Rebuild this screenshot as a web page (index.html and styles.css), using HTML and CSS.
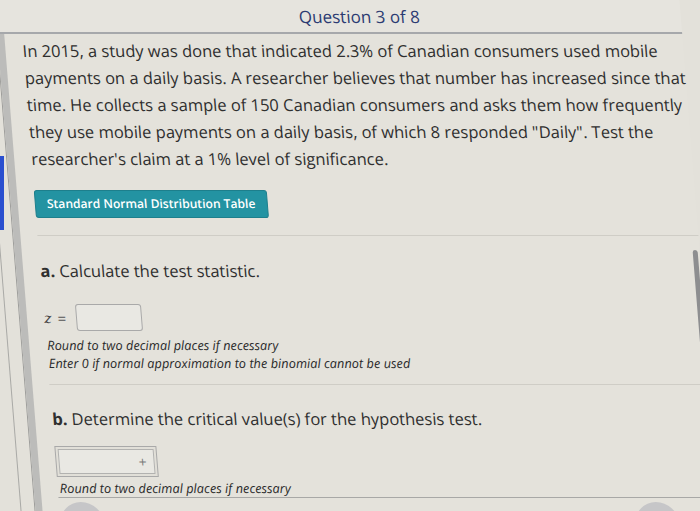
FILE: index.html
```html
<!DOCTYPE html>
<html lang="en">
<head>
<meta charset="utf-8">
<title>Question 3 of 8</title>
<link rel="stylesheet" href="styles.css">
</head>
<body>
<div class="screen">
  <div class="page">
    <header class="title-bar">
      <h1 class="title">Question 3 of 8</h1>
    </header>
    <main class="content">
      <p class="prompt">In 2015, a study was done that indicated 2.3% of Canadian consumers used mobile<br>payments on a daily basis. A researcher believes that number has increased since that<br>time. He collects a sample of 150 Canadian consumers and asks them how frequently<br>they use mobile payments on a daily basis, of which 8 responded "Daily". Test the<br>researcher's claim at a 1% level of significance.</p>
      <div class="btn-row">
        <button class="table-btn" type="button">Standard Normal Distribution Table</button>
      </div>
      <hr class="divider">
      <section class="part part-a">
        <p class="part-q"><b>a.</b> Calculate the test statistic.</p>
        <div class="answer-row">
          <span class="var">z</span><span class="eq">=</span><span class="input-box"></span>
        </div>
        <p class="hint">Round to two decimal places if necessary<br>Enter 0 if normal approximation to the binomial cannot be used</p>
      </section>
      <hr class="divider divider-b">
      <section class="part part-b">
        <p class="part-q"><b>b.</b> Determine the critical value(s) for the hypothesis test.</p>
        <div class="multi-box">
          <span class="inner-box"><span class="plus">+</span></span>
        </div>
        <p class="hint">Round to two decimal places if necessary</p>
      </section>
      <div class="footer">
        <span class="circle"></span>
        <span class="circle"></span>
      </div>
    </main>
    <div class="scroll-thumb"></div>
  </div>
  <div class="blue-tab"></div>
</div>
</body>
</html>
```

FILE: styles.css
```css
html, body {
  margin: 0;
  padding: 0;
  width: 700px;
  height: 511px;
  overflow: hidden;
  background: #e3e1da;
}

.screen {
  position: relative;
  width: 700px;
  height: 511px;
  overflow: hidden;
  font-family: "Open Sans", "DejaVu Sans", sans-serif;
  color: #2e2e2e;
}

.page {
  position: relative;
  width: 700px;
  height: 511px;
  transform: skewX(4.6deg);
  transform-origin: 50% 50%;
  border-left: 1px solid #a9a9a6;
  box-sizing: border-box;
}

.title-bar {
  height: 32px;
  border-bottom: 2px solid #a6a8ab;
  background: #e6e4de;
  display: flex;
  align-items: center;
  justify-content: center;
}

.title {
  margin: 0 0 0 56px;
  font-size: 17px;
  font-weight: 400;
  color: #2c3b72;
  line-height: 1;
}

.content {
  margin-left: 14px;
  border-left: 7px solid #bcbcba;
  box-shadow: -1px 0 0 #9d9d9b;
  padding: 3px 0 0 17px;
  height: 477px;
  box-sizing: border-box;
  display: flex;
  flex-direction: column;
  background: #e4e2db;
}

.prompt {
  margin: 0;
  font-size: 16.5px;
  line-height: 27px;
  color: #2f2f2f;
  white-space: nowrap;
}

.btn-row {
  margin-top: 18px;
  display: flex;
}

.table-btn {
  font-family: "Open Sans", "DejaVu Sans", sans-serif;
  font-size: 12.1px;
  font-weight: 600;
  color: #ffffff;
  background: #2393a2;
  border: 1px solid #1d7f8c;
  border-radius: 3px;
  height: 28px;
  padding: 0 11px;
  line-height: 26px;
}

.divider {
  margin: 17px 0 0 0;
  border: 0;
  border-top: 1px solid #cfcdc6;
  height: 0;
}

.part {
  padding-left: 0;
}

.part-q {
  margin: 24px 0 0 0;
  font-size: 16.5px;
  line-height: 22px;
  color: #2f2f2f;
}

.part-q b {
  font-weight: 700;
}

.answer-row {
  margin-top: 22px;
  display: flex;
  align-items: center;
  height: 27px;
}

.var {
  font-family: "DejaVu Serif", serif;
  font-style: italic;
  font-size: 14px;
  color: #444;
  margin-left: 0;
}

.eq {
  font-size: 15px;
  color: #555;
  margin-left: 6px;
  margin-right: 10px;
}

.input-box {
  display: block;
  width: 64px;
  height: 25px;
  border: 1px solid #a9a9a9;
  border-radius: 3px;
  background: #e9e8e3;
}

.hint {
  margin: 5px 0 0 1px;
  font-size: 12.8px;
  font-style: italic;
  line-height: 18px;
  color: #2b2b2b;
}

.divider-b {
  margin-top: 12px;
}

.part-b .part-q {
  margin-top: 23px;
}

.multi-box {
  margin: 16px 0 0 0;
  width: 96px;
  height: 25px;
  padding: 2px;
  border: 1px solid #a9a9a9;
  background: #e1dfd8;
  display: flex;
}

.inner-box {
  flex: 1;
  border: 1px solid #b2b2b0;
  background: #e9e8e3;
  display: flex;
  align-items: center;
  justify-content: flex-end;
  padding-right: 7px;
}

.plus {
  font-size: 14px;
  color: #7a7a7a;
  line-height: 1;
}

.part-b .hint {
  margin-top: 2px;
  margin-left: 2px;
}

.footer {
  margin-top: 0;
  border-top: 1px solid #a8a8a6;
  display: flex;
  justify-content: space-between;
  padding: 4px 42px 0 0;
  flex: 1;
}

.circle {
  display: block;
  width: 44px;
  height: 44px;
  border-radius: 50%;
  background: #c6c6c8;
}

.scroll-thumb {
  position: absolute;
  right: 2px;
  top: 250px;
  width: 5px;
  height: 100px;
  border-radius: 3px;
  background: #8d8e90;
}

.blue-tab {
  position: absolute;
  left: 0;
  top: 156px;
  width: 4px;
  height: 74px;
  background: #2a4fcf;
}
```
